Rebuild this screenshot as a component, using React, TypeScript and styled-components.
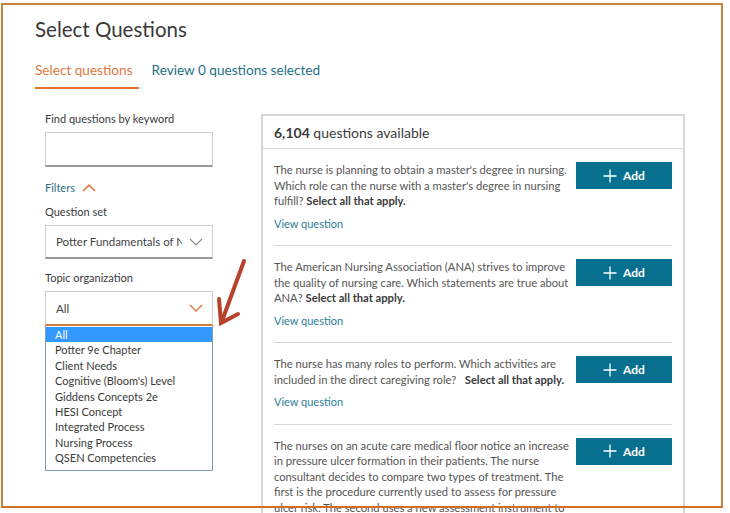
import React from "react";
import styled, { createGlobalStyle } from "styled-components";

const Global = createGlobalStyle`
  html, body { margin: 0; padding: 0; background: #fff; }
  body { font-family: Lato, "Open Sans", sans-serif; color: #333; overflow: hidden; }
  * { box-sizing: border-box; }
`;

const Page = styled.div`
  position: relative;
  width: 730px;
  height: 513px;
  overflow: hidden;
  padding: 17px 0 0 35px;
`;

const Title = styled.h1`
  margin: 0;
  font-size: 20.5px;
  line-height: 24px;
  font-weight: 400;
  color: #3a3a3a;
`;

const Tabs = styled.div`
  display: flex;
  gap: 13px;
  margin-top: 21px;
`;

const Tab = styled.div<{ $active?: boolean }>`
  font-size: 13.6px;
  line-height: 17px;
  padding: 0 ${(p) => (p.$active ? "6px" : "0")} 8px 0;
  color: ${(p) => (p.$active ? "#e0783f" : "#256f87")};
  border-bottom: 2px solid ${(p) => (p.$active ? "#e07028" : "transparent")};
`;

const Body = styled.div`
  display: flex;
  align-items: flex-start;
  margin-top: 23px;
`;

const LeftCol = styled.div`
  position: relative;
  width: 168px;
  margin-left: 10px;
  display: flex;
  flex-direction: column;
`;

const Label = styled.div<{ $mt?: number }>`
  font-size: 11px;
  line-height: 14px;
  color: #3a3a3a;
  margin-top: ${(p) => p.$mt ?? 0}px;
`;

const Input = styled.div`
  margin-top: 6px;
  height: 35px;
  border: 1px solid #cfcfcf;
  border-bottom: 2px solid #9a9a9a;
  background: #fff;
`;

const FiltersToggle = styled.div`
  margin-top: 14px;
  display: flex;
  align-items: center;
  gap: 7px;
  font-size: 11px;
  line-height: 14px;
  color: #2a6f88;
`;

const SelectWrap = styled.div`
  position: relative;
`;

const SelectBox = styled.div<{ $focused?: boolean }>`
  margin-top: 6px;
  height: ${(p) => (p.$focused ? 35 : 34)}px;
  border: 1px solid #cfcfcf;
  border-bottom: 2px solid ${(p) => (p.$focused ? "#d9793a" : "#9a9a9a")};
  display: flex;
  align-items: center;
  padding: 0 9px 0 10px;
  font-size: 11.5px;
  color: #444;
`;

const SelectText = styled.span`
  flex: 0 0 126px;
  white-space: nowrap;
  overflow: hidden;
`;

const Chevron = styled.svg`
  margin-left: auto;
  flex: none;
`;

const ListBox = styled.div`
  position: absolute;
  left: 0;
  top: 100%;
  width: 168px;
  border: 1px solid #7f9db9;
  border-top: none;
  background: #fff;
  padding: 1px 0 4px;
  z-index: 2;
`;

const Option = styled.div<{ $selected?: boolean }>`
  font-size: 11px;
  line-height: 15.4px;
  padding-left: 9px;
  color: ${(p) => (p.$selected ? "#fff" : "#3a3a3a")};
  background: ${(p) => (p.$selected ? "#3399ff" : "transparent")};
`;

const Panel = styled.div`
  margin-left: 48px;
  margin-top: 2px;
  width: 424px;
  height: 420px;
  border: 2px solid #d6d6d6;
  border-bottom: none;
`;

const PanelHeader = styled.div`
  height: 33px;
  border-bottom: 1px solid #d6d6d6;
  padding: 0 11px;
  display: flex;
  align-items: center;
  font-size: 14px;
  color: #3a3a3a;
  b { font-weight: 700; }
`;

const Items = styled.div`
  padding: 0 11px;
`;

const Item = styled.div`
  display: flex;
  align-items: flex-start;
  gap: 4px;
  padding: 13px 0 0;
  border-bottom: 1px solid #d6d6d6;
`;

const ItemBody = styled.div`
  width: 298px;
  flex: none;
`;

const QText = styled.div`
  font-size: 11.2px;
  line-height: 15.5px;
  color: #555;
  b { font-weight: 700; color: #3a3a3a; }
`;

const ViewLink = styled.div`
  margin-top: 7px;
  margin-bottom: 14.5px;
  font-size: 11px;
  line-height: 15px;
  color: #2b7c97;
`;

const AddButton = styled.div`
  width: 96px;
  height: 27px;
  flex: none;
  background: #08708f;
  color: #fff;
  display: flex;
  align-items: center;
  justify-content: center;
  gap: 6px;
  font-size: 12px;
  font-weight: 700;
`;

const Frame = styled.div`
  position: absolute;
  left: 1px;
  top: 3px;
  width: 722px;
  height: 505px;
  border: 2px solid #c8853d;
  border-bottom-color: #d26e24;
  pointer-events: none;
  z-index: 5;
`;

const ArrowSvg = styled.svg`
  position: absolute;
  left: 0;
  top: 0;
  pointer-events: none;
  z-index: 4;
`;

const Plus = () => (
  <svg width="14" height="14" viewBox="0 0 14 14">
    <path d="M7 0.5V13.5M0.5 7H13.5" stroke="#fff" strokeWidth="1.3" fill="none" />
  </svg>
);

const Add = () => (
  <AddButton>
    <Plus />
    <span>Add</span>
  </AddButton>
);

const questions: { text: React.ReactNode; view: boolean }[] = [
  {
    text: (
      <>
        The nurse is planning to obtain a master's degree in nursing. Which role can the nurse with a master's degree in nursing
        fulfill? <b>Select all that apply.</b>
      </>
    ),
    view: true,
  },
  {
    text: (
      <>
        The American Nursing Association (ANA) strives to improve the quality of nursing care. Which statements are true about
        ANA? <b>Select all that apply.</b>
      </>
    ),
    view: true,
  },
  {
    text: (
      <>
        The nurse has many roles to perform. Which activities are included in the direct caregiving role?&nbsp;&nbsp;&nbsp;
        <b>Select all that apply.</b>
      </>
    ),
    view: true,
  },
  {
    text: (
      <>
        The nurses on an acute care medical floor notice an increase in pressure ulcer formation in their patients. The nurse
        consultant decides to compare two types of treatment. The first is the procedure currently used to assess for pressure
        ulcer risk. The second uses a new assessment instrument to identify patients at risk.
      </>
    ),
    view: true,
  },
];

const topics = [
  "All",
  "Potter 9e Chapter",
  "Client Needs",
  "Cognitive (Bloom's) Level",
  "Giddens Concepts 2e",
  "HESI Concept",
  "Integrated Process",
  "Nursing Process",
  "QSEN Competencies",
];

export default function App() {
  return (
    <>
      <Global />
      <Page>
        <Title>Select Questions</Title>
        <Tabs>
          <Tab $active>Select questions</Tab>
          <Tab>Review 0 questions selected</Tab>
        </Tabs>
        <Body>
          <LeftCol>
            <Label>Find questions by keyword</Label>
            <Input />
            <FiltersToggle>
              Filters
              <svg width="14" height="8" viewBox="0 0 14 8">
                <path d="M1 7L7 1.2L13 7" stroke="#e0783f" strokeWidth="1.6" fill="none" />
              </svg>
            </FiltersToggle>
            <Label $mt={10}>Question set</Label>
            <SelectBox>
              <SelectText>Potter Fundamentals of Nursing</SelectText>
              <Chevron width="14" height="8" viewBox="0 0 14 8">
                <path d="M1 1L7 7L13 1" stroke="#8a8a8a" strokeWidth="1.1" fill="none" />
              </Chevron>
            </SelectBox>
            <Label $mt={12}>Topic organization</Label>
            <SelectWrap>
              <SelectBox $focused>
                <SelectText>All</SelectText>
                <Chevron width="14" height="8" viewBox="0 0 14 8">
                  <path d="M1 1L7 7L13 1" stroke="#e0783f" strokeWidth="1.4" fill="none" />
                </Chevron>
              </SelectBox>
              <ListBox>
                {topics.map((t, i) => (
                  <Option key={t} $selected={i === 0}>
                    {t}
                  </Option>
                ))}
              </ListBox>
            </SelectWrap>
          </LeftCol>
          <Panel>
            <PanelHeader>
              <span>
                <b>6,104</b> questions available
              </span>
            </PanelHeader>
            <Items>
              {questions.map((q, i) => (
                <Item key={i}>
                  <ItemBody>
                    <QText>{q.text}</QText>
                    {q.view && <ViewLink>View question</ViewLink>}
                  </ItemBody>
                  <Add />
                </Item>
              ))}
            </Items>
          </Panel>
        </Body>
        <ArrowSvg width="730" height="513" viewBox="0 0 730 513">
          <path d="M244 261L222 321" stroke="#b8432d" strokeWidth="4" fill="none" strokeLinecap="round" />
          <path d="M219 299L221 323L238 314" stroke="#b8432d" strokeWidth="4" fill="none" strokeLinejoin="miter" strokeLinecap="round" />
        </ArrowSvg>
        <Frame />
      </Page>
    </>
  );
}
